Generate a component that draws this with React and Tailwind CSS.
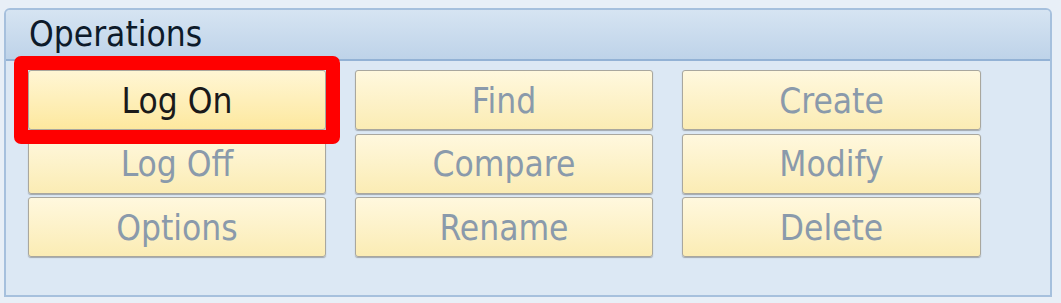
import React from 'react';

const buttons = [
  ['Log On', 'Find', 'Create'],
  ['Log Off', 'Compare', 'Modify'],
  ['Options', 'Rename', 'Delete'],
];

const font = { fontFamily: '"DejaVu Sans Condensed", "DejaVu Sans", "Liberation Sans", sans-serif' };

function OpButton({ label, active }) {
  return (
    <div className="relative">
      <button
        className={`w-full h-[60px] rounded-[3px] border border-[#a9a79e] shadow-[0_1px_1px_rgba(90,90,90,0.45)] text-[35px] leading-none pt-[2px] ${
          active
            ? 'bg-gradient-to-b from-[#fff6d4] to-[#fde89e] text-[#1a1a1a]'
            : 'bg-gradient-to-b from-[#fff8de] to-[#fbecb4] text-[#8a9aab]'
        }`}
        style={font}
      >
        {label}
      </button>
      {active && (
        <div className="absolute z-10 -inset-[14px] border-[14px] border-[#ff0000] rounded-[7px] pointer-events-none" />
      )}
    </div>
  );
}

export default function App() {
  return (
    <div className="w-[1061px] h-[303px] bg-[#e8eff7] pt-[8px] pl-[4px] pr-[9px] pb-[6px]">
      <div className="h-full border-2 border-[#a6c0dd] rounded-t-[6px] bg-[#dce8f4] flex flex-col">
        <div
          className="h-[51px] shrink-0 bg-gradient-to-b from-[#d6e4f2] to-[#bed3e9] border-b-2 border-[#93b2d5] rounded-t-[4px] pl-[23px] flex items-center text-[35px] text-[#0d1a2a] leading-none"
          style={font}
        >
          Operations
        </div>
        <div className="pl-[22px] pt-[9px] grid grid-cols-[298px_298px_299px] gap-x-[29px] gap-y-[3.5px]">
          {buttons.flat().map((label) => (
            <OpButton key={label} label={label} active={label === 'Log On'} />
          ))}
        </div>
      </div>
    </div>
  );
}
